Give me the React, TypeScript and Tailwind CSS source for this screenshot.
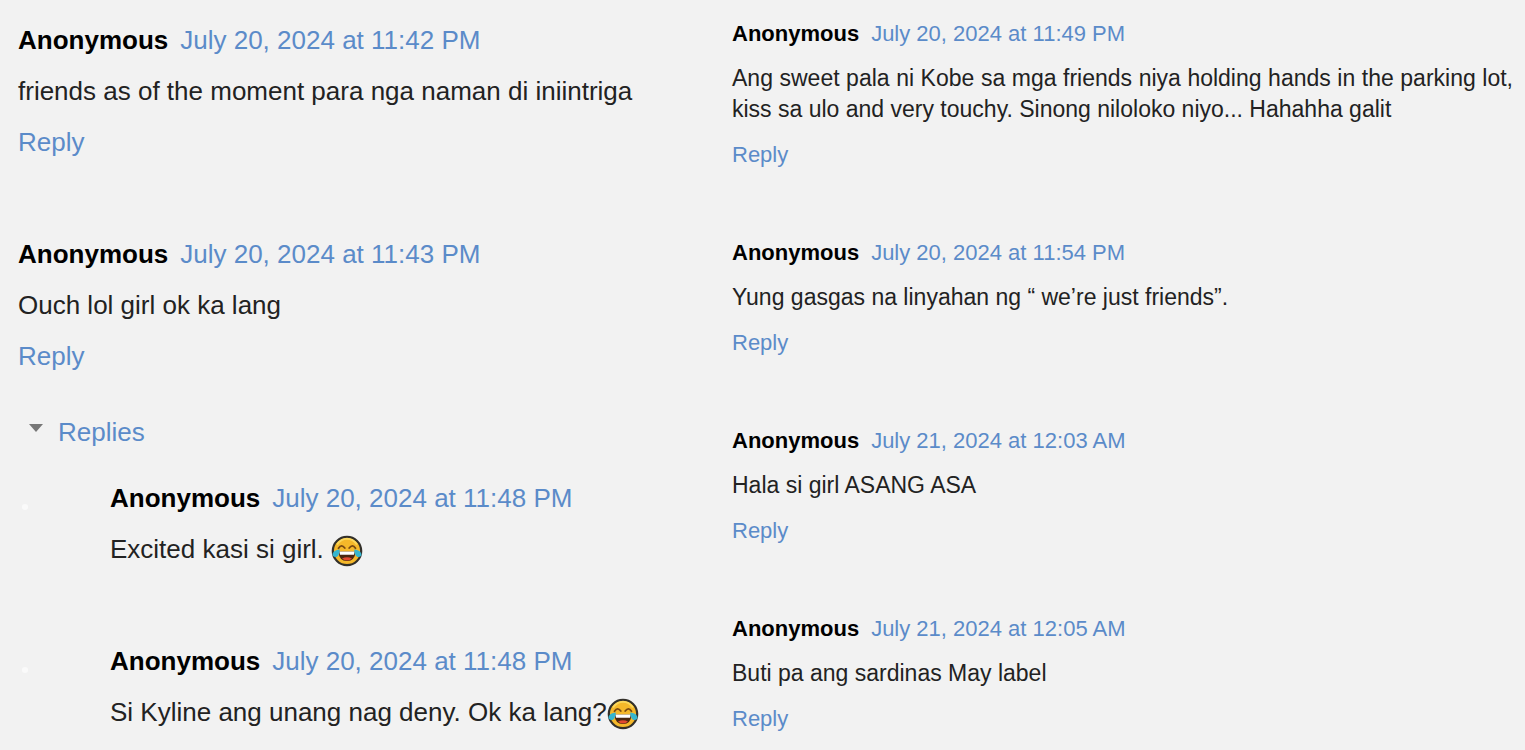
import type { ReactNode } from "react";

type Comment = {
  date: string;
  body: ReactNode;
};

function JoyEmoji() {
  return (
    <svg viewBox="0 0 32 32" className="inline-block size-8 align-middle" role="img" aria-label="face with tears of joy">
      <circle cx="16" cy="16" r="14.2" fill="#f5b82a" stroke="#33302a" strokeWidth="2.2" />
      <path d="M6 9.5Q10 3.8 16 3.8T26 9.5" fill="none" stroke="#fbd75a" strokeWidth="2" />
      <path d="M7.5 13.2Q10.5 8.6 13.8 13M18.2 13Q21.5 8.6 24.5 13.2" fill="none" stroke="#7a4a12" strokeWidth="1.8" strokeLinecap="round" />
      <path d="M7.5 16.5H24.5Q24 26 16 26T7.5 16.5Z" fill="#4a2710" />
      <path d="M8.3 16.5H23.7L23 19.8H9Z" fill="#fff" />
      <path d="M11 23.6Q16 20.8 21 23.6Q19 25.6 16 25.6T11 23.6Z" fill="#e2492f" />
      <path d="M8.8 14.6C5 14.8 1.6 17 1.5 19.6C1.6 22.6 5.8 23 7.4 20.2C8.5 18.4 8.8 16.5 8.8 14.6Z" fill="#35b5cf" />
      <path d="M23.2 14.6C27 14.8 30.4 17 30.5 19.6C30.4 22.6 26.2 23 24.6 20.2C23.5 18.4 23.2 16.5 23.2 14.6Z" fill="#35b5cf" />
    </svg>
  );
}

const mainThread: Comment[] = [
  { date: "July 20, 2024 at 11:42 PM", body: "friends as of the moment para nga naman di iniintriga" },
  { date: "July 20, 2024 at 11:43 PM", body: "Ouch lol girl ok ka lang" },
];

const replies: Comment[] = [
  { date: "July 20, 2024 at 11:48 PM", body: <>Excited kasi si girl. <JoyEmoji /></> },
  { date: "July 20, 2024 at 11:48 PM", body: <>Si Kyline ang unang nag deny. Ok ka lang?<JoyEmoji /></> },
];

const sideThread: Comment[] = [
  {
    date: "July 20, 2024 at 11:49 PM",
    body: "Ang sweet pala ni Kobe sa mga friends niya holding hands in the parking lot, kiss sa ulo and very touchy. Sinong niloloko niyo... Hahahha galit",
  },
  { date: "July 20, 2024 at 11:54 PM", body: "Yung gasgas na linyahan ng “ we’re just friends”." },
  { date: "July 21, 2024 at 12:03 AM", body: "Hala si girl ASANG ASA" },
  { date: "July 21, 2024 at 12:05 AM", body: "Buti pa ang sardinas May label" },
];

function CommentHeader({ date }: { date: string }) {
  return (
    <header className="flex items-baseline gap-3">
      <cite className="font-bold text-black not-italic">Anonymous</cite>
      <a href="#comment" className="text-[#5b8bc9]">{date}</a>
    </header>
  );
}

function ReplyLink() {
  return <a href="#reply" className="self-start text-[#5b8bc9]">Reply</a>;
}

export default function App() {
  return (
    <main className="flex min-h-screen bg-[#f2f2f2] font-['Liberation_Sans',Arial,sans-serif] text-[#222]">
      <section className="w-[48%] shrink-0 pt-[22px] pl-[18px] text-[26px] leading-9">
        <div className="flex flex-col gap-[76px]">
          {mainThread.map((comment) => (
            <article key={comment.date} className="flex flex-col gap-[15px]">
              <CommentHeader date={comment.date} />
              <p>{comment.body}</p>
              <ReplyLink />
            </article>
          ))}
        </div>

        <div className="mt-10 flex items-center gap-[14px] pl-[10px]">
          <svg viewBox="0 0 16 9" className="mb-2 w-4" aria-hidden="true">
            <path d="M1 0H15L8 8Z" fill="#777" />
          </svg>
          <a href="#replies" className="text-[#5b8bc9]">Replies</a>
        </div>

        <div className="mt-[30px] flex flex-col gap-[76px]">
          {replies.map((comment, i) => (
            <article key={i} className="flex gap-[82px]">
              <span className="mt-6 ml-1 size-1.5 rounded-full bg-[#fafafa]" />
              <div className="flex flex-col gap-[15px]">
                <CommentHeader date={comment.date} />
                <p>{comment.body}</p>
              </div>
            </article>
          ))}
        </div>
      </section>

      <section className="flex min-w-0 flex-1 flex-col gap-[67px] pt-[18px] pr-3 text-[22px] leading-[31px]">
        {sideThread.map((comment) => (
          <article key={comment.date} className="flex flex-col gap-[14px]">
            <CommentHeader date={comment.date} />
            <p className="text-justify text-[23px] leading-[31px]">{comment.body}</p>
            <ReplyLink />
          </article>
        ))}
      </section>
    </main>
  );
}
